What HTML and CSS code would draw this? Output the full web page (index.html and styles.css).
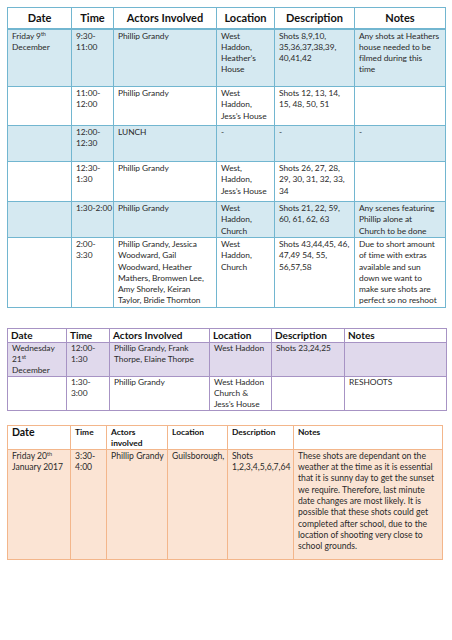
FILE: index.html
```html
<!DOCTYPE html>
<html>
<head>
<meta charset="utf-8">
<link rel="stylesheet" href="styles.css">
</head>
<body>
<div class="page">
<table class="sched blue">
  <colgroup>
    <col class="c1"><col class="c2"><col class="c3"><col class="c4"><col class="c5"><col class="c6">
  </colgroup>
  <thead>
    <tr class="h"><th>Date</th><th>Time</th><th>Actors Involved</th><th>Location</th><th>Description</th><th>Notes</th></tr>
  </thead>
  <tbody>
    <tr class="alt r1"><td>Friday 9<sup>th</sup> December</td><td>9:30-<br>11:00</td><td>Phillip Grandy</td><td>West Haddon, Heather’s House</td><td>Shots 8,9,10, 35,36,37,38,39, 40,41,42</td><td class="note">Any shots at Heathers house needed to be filmed during this time</td></tr>
    <tr class="r2"><td></td><td>11:00-<br>12:00</td><td>Phillip Grandy</td><td>West Haddon, Jess’s House</td><td>Shots 12, 13, 14, 15, 48, 50, 51</td><td class="note"></td></tr>
    <tr class="alt r3"><td></td><td>12:00-<br>12:30</td><td>LUNCH</td><td>-</td><td>-</td><td class="note">-</td></tr>
    <tr class="r4"><td></td><td>12:30-<br>1:30</td><td>Phillip Grandy</td><td>West, Haddon, Jess’s House</td><td>Shots 26, 27, 28, 29, 30, 31, 32, 33, 34</td><td class="note"></td></tr>
    <tr class="alt r5"><td></td><td class="nowrap">1:30-2:00</td><td>Phillip Grandy</td><td>West Haddon, Church</td><td>Shots 21, 22, 59, 60, 61, 62, 63</td><td class="note">Any scenes featuring Phillip alone at Church to be done</td></tr>
    <tr class="r6"><td></td><td>2:00-<br>3:30</td><td>Phillip Grandy, Jessica Woodward, Gail Woodward, Heather Mathers, Bromwen Lee, Amy Shorely, Keiran Taylor, Bridie Thornton</td><td>West Haddon, Church</td><td>Shots 43,44,45, 46, 47,49 54, 55, 56,57,58</td><td class="note">Due to short amount of time with extras available and sun down we want to make sure shots are perfect so no reshoot</td></tr>
  </tbody>
</table>

<table class="sched purple">
  <colgroup>
    <col class="c1"><col class="c2"><col class="c3"><col class="c4"><col class="c5"><col class="c6">
  </colgroup>
  <thead>
    <tr class="h"><th>Date</th><th>Time</th><th>Actors Involved</th><th>Location</th><th>Description</th><th>Notes</th></tr>
  </thead>
  <tbody>
    <tr class="alt r1"><td>Wednesday<br>21<sup>st</sup><br>December</td><td>12:00-<br>1:30</td><td>Phillip Grandy, Frank Thorpe, Elaine Thorpe</td><td>West Haddon</td><td>Shots 23,24,25</td><td></td></tr>
    <tr class="r2"><td></td><td>1:30-<br>3:00</td><td>Phillip Grandy</td><td>West Haddon Church &amp; Jess’s House</td><td></td><td>RESHOOTS</td></tr>
  </tbody>
</table>

<table class="sched orange">
  <colgroup>
    <col class="c1"><col class="c2"><col class="c3"><col class="c4"><col class="c5"><col class="c6">
  </colgroup>
  <thead>
    <tr class="h"><th class="big">Date</th><th>Time</th><th>Actors<br>involved</th><th>Location</th><th>Description</th><th>Notes</th></tr>
  </thead>
  <tbody>
    <tr class="alt r1"><td>Friday 20<sup>th</sup> January 2017</td><td>3:30-<br>4:00</td><td>Phillip Grandy</td><td>Guilsborough,</td><td>Shots 1,2,3,4,5,6,7,64</td><td>These shots are dependant on the weather at the time as it is essential that it is sunny day to get the sunset we require. Therefore, last minute date changes are most likely. It is possible that these shots could get completed after school, due to the location of shooting very close to school grounds.</td></tr>
  </tbody>
</table>
</div>
</body>
</html>
```

FILE: styles.css
```css
html, body {
  margin: 0;
  padding: 0;
  background: #ffffff;
}
.page {
  padding: 7px 0 0 7px;
  font-family: Lato, "Open Sans", "Liberation Sans", sans-serif;
  color: #2a2a2a;
}
.sched {
  border-collapse: collapse;
  table-layout: fixed;
  font-size: 8.4px;
  letter-spacing: -0.05px;
  line-height: 11.3px;
}
.sched th, .sched td {
  padding: 1px 2px 0 4px;
  vertical-align: top;
  text-align: left;
  font-weight: normal;
  overflow: hidden;
}
.sched .nowrap { white-space: nowrap; padding-right: 0; }
.blue td.note { padding-right: 5px; }
.sched sup {
  font-size: 5.5px;
  line-height: 1;
  vertical-align: 3px;
}
.sched th {
  font-weight: bold;
  color: #111;
}

/* blue table */
.blue { width: 438px; }
.blue .c1 { width: 64px; }
.blue .c2 { width: 42px; }
.blue .c3 { width: 103px; }
.blue .c4 { width: 58px; }
.blue .c5 { width: 80px; }
.blue .c6 { width: 91px; }
.blue th, .blue td { border: 1px solid #72b6d0; }
.blue th {
  text-align: center;
  font-size: 11px;
  letter-spacing: 0;
  vertical-align: middle;
  padding: 0;
  border-bottom: 2px solid #72b6d0;
}
.blue .h { height: 21px; }
.blue .alt td { background: #d5e9f1; }
.blue .r1 { height: 58px; }
.blue .r2 { height: 39px; }
.blue .r3 { height: 36px; }
.blue .r4 { height: 40px; }
.blue .r5 { height: 36px; }
.blue .r6 { height: 68px; }

/* purple table */
.purple { width: 439px; margin-top: 20px; }
.purple .c1 { width: 59px; }
.purple .c2 { width: 43px; }
.purple .c3 { width: 100px; }
.purple .c4 { width: 62px; }
.purple .c5 { width: 73px; }
.purple .c6 { width: 102px; }
.purple th, .purple td { border: 1px solid #a793c4; }
.purple td { padding-top: 0; line-height: 11px; }
.purple th {
  font-size: 10px;
  letter-spacing: 0;
  line-height: 13px;
  padding: 0 3px 0 3px;
  vertical-align: middle;
}
.purple .h { height: 14px; }
.purple .alt td { background: #e0d9ec; }
.purple .r1 { height: 34px; }
.purple .r2 { height: 33px; }

/* orange table */
.orange { width: 435px; margin-top: 14px; font-size: 8.6px; letter-spacing: 0; }
.orange .c1 { width: 63px; }
.orange .c2 { width: 36px; }
.orange .c3 { width: 61px; }
.orange .c4 { width: 60px; }
.orange .c5 { width: 66px; }
.orange .c6 { width: 149px; }
.orange th, .orange td { border: 1px solid #f3b68b; }
.orange th {
  font-size: 8.4px;
  line-height: 11px;
  padding: 1px 3px 0 4px;
}
.orange th.big { font-size: 10.5px; }
.orange .h { height: 23px; }
.orange .alt td { background: #fbe4d4; }
.orange .r1 { height: 110px; }
```
